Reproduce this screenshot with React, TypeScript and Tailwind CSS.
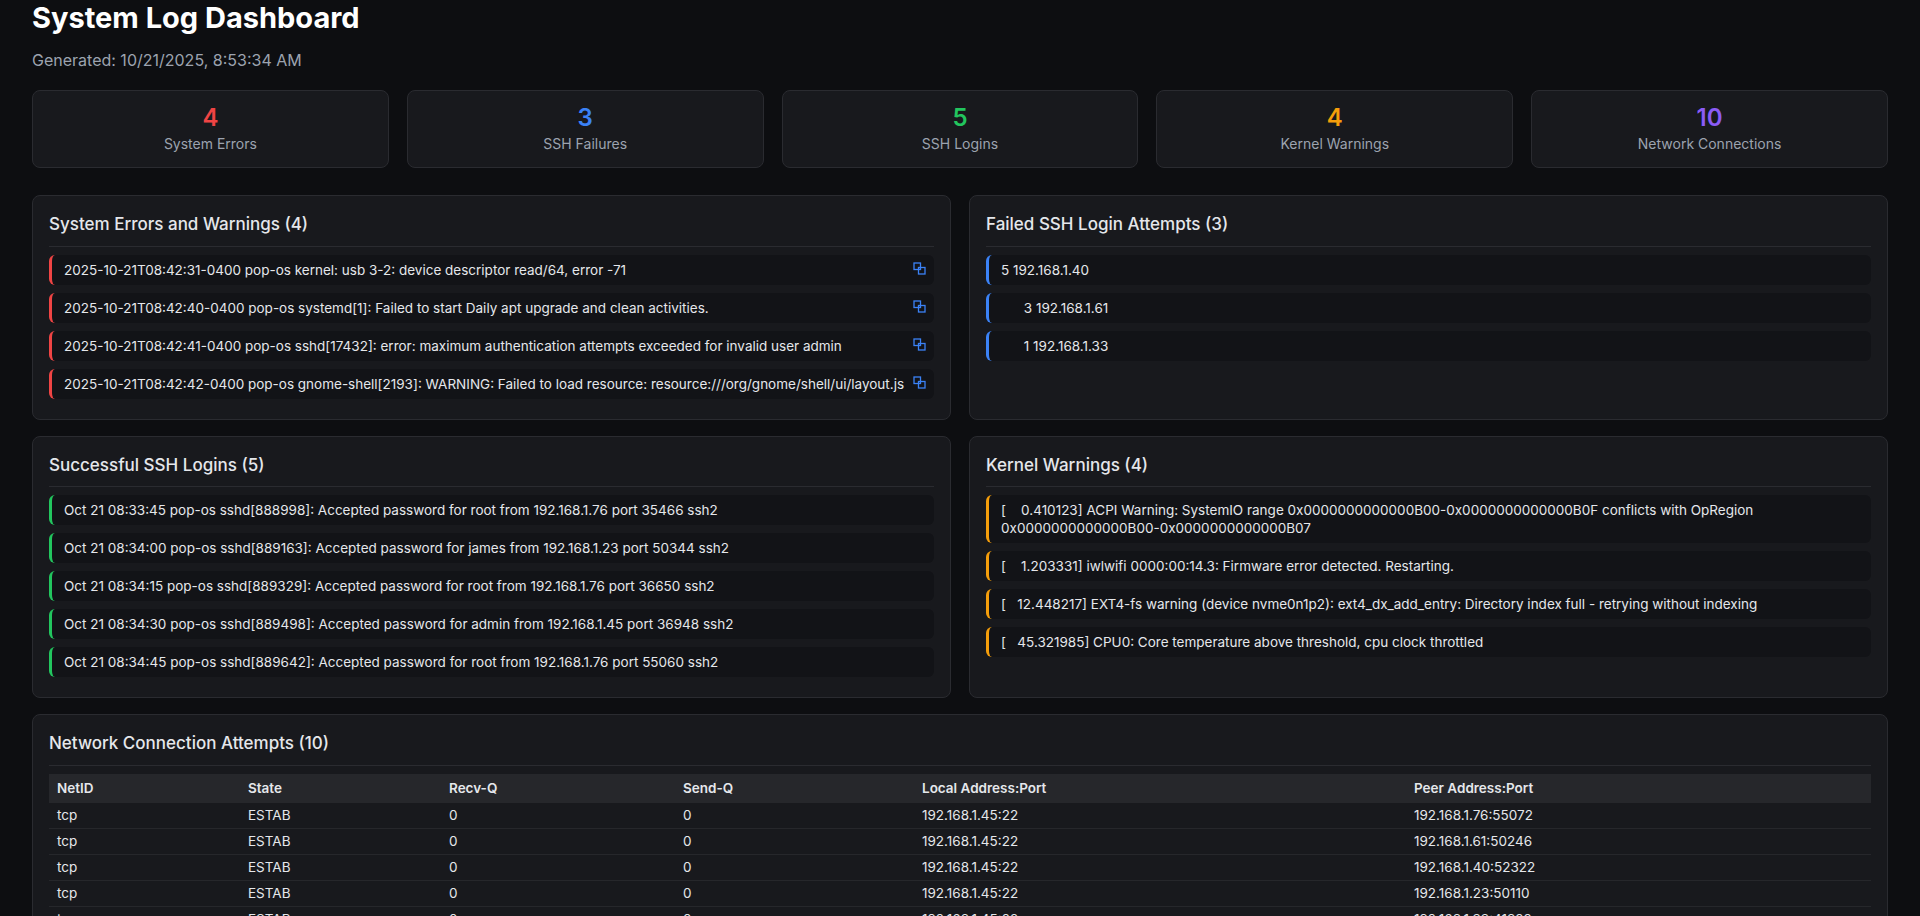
import React from "react";

const CopyIcon = () => (
  <svg width="13" height="13" viewBox="0 0 13 13" fill="none" stroke="#3b82f6" strokeWidth="1.3">
    <rect x="1" y="1" width="6.5" height="6.5" />
    <rect x="5.5" y="5.5" width="6.5" height="6.5" />
  </svg>
);

const stats = [
  { n: "4", l: "System Errors", c: "text-[#ef4444]" },
  { n: "3", l: "SSH Failures", c: "text-[#3b82f6]" },
  { n: "5", l: "SSH Logins", c: "text-[#22c55e]" },
  { n: "4", l: "Kernel Warnings", c: "text-[#f59e0b]" },
  { n: "10", l: "Network Connections", c: "text-[#8b5cf6]" },
];

const errors = [
  "2025-10-21T08:42:31-0400 pop-os kernel: usb 3-2: device descriptor read/64, error -71",
  "2025-10-21T08:42:40-0400 pop-os systemd[1]: Failed to start Daily apt upgrade and clean activities.",
  "2025-10-21T08:42:41-0400 pop-os sshd[17432]: error: maximum authentication attempts exceeded for invalid user admin",
  "2025-10-21T08:42:42-0400 pop-os gnome-shell[2193]: WARNING: Failed to load resource: resource:///org/gnome/shell/ui/layout.js",
];
const failed = ["5 192.168.1.40", "      3 192.168.1.61", "      1 192.168.1.33"];
const logins = [
  "Oct 21 08:33:45 pop-os sshd[888998]: Accepted password for root from 192.168.1.76 port 35466 ssh2",
  "Oct 21 08:34:00 pop-os sshd[889163]: Accepted password for james from 192.168.1.23 port 50344 ssh2",
  "Oct 21 08:34:15 pop-os sshd[889329]: Accepted password for root from 192.168.1.76 port 36650 ssh2",
  "Oct 21 08:34:30 pop-os sshd[889498]: Accepted password for admin from 192.168.1.45 port 36948 ssh2",
  "Oct 21 08:34:45 pop-os sshd[889642]: Accepted password for root from 192.168.1.76 port 55060 ssh2",
];
const kernel = [
  "[    0.410123] ACPI Warning: SystemIO range 0x0000000000000B00-0x0000000000000B0F conflicts with OpRegion 0x0000000000000B00-0x0000000000000B07",
  "[    1.203331] iwlwifi 0000:00:14.3: Firmware error detected. Restarting.",
  "[   12.448217] EXT4-fs warning (device nvme0n1p2): ext4_dx_add_entry: Directory index full - retrying without indexing",
  "[   45.321985] CPU0: Core temperature above threshold, cpu clock throttled",
];
const net = [
  ["tcp", "ESTAB", "0", "0", "192.168.1.45:22", "192.168.1.76:55072"],
  ["tcp", "ESTAB", "0", "0", "192.168.1.45:22", "192.168.1.61:50246"],
  ["tcp", "ESTAB", "0", "0", "192.168.1.45:22", "192.168.1.40:52322"],
  ["tcp", "ESTAB", "0", "0", "192.168.1.45:22", "192.168.1.23:50110"],
  ["tcp", "ESTAB", "0", "0", "192.168.1.45:22", "192.168.1.33:41822"],
];

function Panel({ title, children }: { title: string; children: React.ReactNode }) {
  return (
    <div className="bg-[#18191d] border border-[#2a2b30] rounded-lg px-4 pt-4 pb-5">
      <h2 className="text-[17px] font-medium text-[#e5e7eb] pb-2 border-b border-[#2a2b30] mb-2">{title}</h2>
      {children}
    </div>
  );
}

function Row({ text, color, copy }: { text: string; color: string; copy?: boolean }) {
  return (
    <div className={`relative flex items-start bg-[#121317] rounded-md border-l-[3px] ${color} pl-3 pr-5 py-[6px] text-[13.5px] text-[#e5e7eb] leading-[18px]`}>
      <span className="flex-1 whitespace-pre-wrap">{text}</span>
      {copy && <span className="absolute right-2 top-[7px]"><CopyIcon /></span>}
    </div>
  );
}

export default function App() {
  return (
    <div className="min-h-[916px] bg-[#0d0e11] px-8 pt-0 text-white" style={{ fontFamily: "Inter, 'Noto Sans', sans-serif" }}>
      <h1 className="text-[29px] font-bold leading-[36px]">System Log Dashboard</h1>
      <p className="mt-[12px] text-base text-[#9ca3af]">Generated: 10/21/2025, 8:53:34 AM</p>
      <div className="grid grid-cols-5 gap-[18px] mt-[18px]">
        {stats.map((s) => (
          <div key={s.l} className="bg-[#18191d] border border-[#2a2b30] rounded-lg h-[78px] flex flex-col items-center justify-center">
            <div className="text-2xl font-semibold leading-7"><span className={s.c}>{s.n}</span></div>
            <div className="text-sm text-[#9ca3af] mt-[2px]">{s.l}</div>
          </div>
        ))}
      </div>
      <div className="grid grid-cols-2 gap-x-[18px] gap-y-4 mt-[27px]">
        <Panel title="System Errors and Warnings (4)">
          <div className="flex flex-col gap-2">
            {errors.map((e) => <Row key={e} text={e} color="border-[#ef4444]" copy />)}
          </div>
        </Panel>
        <Panel title="Failed SSH Login Attempts (3)">
          <div className="flex flex-col gap-2">
            {failed.map((e) => <Row key={e} text={e} color="border-[#3b82f6]" />)}
          </div>
        </Panel>
        <Panel title="Successful SSH Logins (5)">
          <div className="flex flex-col gap-2">
            {logins.map((e) => <Row key={e} text={e} color="border-[#22c55e]" />)}
          </div>
        </Panel>
        <Panel title="Kernel Warnings (4)">
          <div className="flex flex-col gap-2">
            {kernel.map((e) => <Row key={e} text={e} color="border-[#f59e0b]" />)}
          </div>
        </Panel>
      </div>
      <div className="mt-4 bg-[#18191d] border border-[#2a2b30] rounded-lg px-4 pt-4 pb-5">
        <h2 className="text-[17px] font-medium text-[#e5e7eb] pb-2 border-b border-[#2a2b30] mb-2">Network Connection Attempts (10)</h2>
        <div className="grid grid-cols-[191px_201px_234px_239px_492px_1fr] bg-[#26272b] h-[29px] items-center text-[13.5px] font-semibold text-[#e5e7eb]">
          {["NetID", "State", "Recv-Q", "Send-Q", "Local Address:Port", "Peer Address:Port"].map((h) => (
            <div key={h} className="px-2">{h}</div>
          ))}
        </div>
        {net.map((r, i) => (
          <div key={i} className="grid grid-cols-[191px_201px_234px_239px_492px_1fr] h-[26px] items-center text-[13.5px] text-[#e5e7eb] border-b border-[#26272b]">
            {r.map((c, j) => <div key={j} className="px-2">{c}</div>)}
          </div>
        ))}
      </div>
    </div>
  );
}
